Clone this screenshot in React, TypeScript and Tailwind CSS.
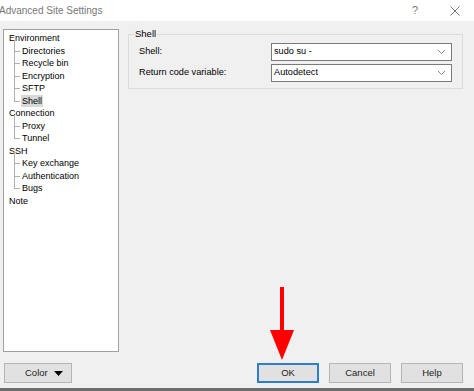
import React from "react";

const tree = [
  { label: "Environment", children: ["Directories", "Recycle bin", "Encryption", "SFTP", "Shell"] },
  { label: "Connection", children: ["Proxy", "Tunnel"] },
  { label: "SSH", children: ["Key exchange", "Authentication", "Bugs"] },
  { label: "Note", children: [] },
];

const Combo = ({ value }: { value: string }) => (
  <div className="flex h-[18px] w-[181px] items-center justify-between border border-[#7a7a7a] bg-white pl-[2px] pr-[5px]">
    <span>{value}</span>
    <svg width="9" height="6" viewBox="0 0 9 6">
      <path d="M1 1 L4.5 4.5 L8 1" fill="none" stroke="#8a8a8a" strokeWidth="1" />
    </svg>
  </div>
);

const Btn = ({ children, primary }: { children: React.ReactNode; primary?: boolean }) => (
  <button
    className={
      "flex h-[20px] w-[62px] items-center justify-center bg-[#e1e1e1] text-[9.5px] text-[#222] " +
      (primary ? "border-2 border-[#2f7fc8]" : "border border-[#b5b5b5]")
    }
  >
    {children}
  </button>
);

export default function App() {
  return (
    <div className="relative flex h-[391px] w-[474px] flex-col bg-[#f0f0f0] text-[9.2px] text-black [font-family:'Liberation_Sans',Arial,sans-serif]">
      <div className="flex h-[21px] items-center bg-white text-[10px] text-[#777]">
        <span className="ml-[-1px]">Advanced Site Settings</span>
        <span className="ml-auto mr-[32px] text-[11px]">?</span>
        <svg width="10" height="10" viewBox="0 0 10 10" className="mr-[14px]">
          <path d="M0.5 0.5 L9.5 9.5 M9.5 0.5 L0.5 9.5" stroke="#777" strokeWidth="1" />
        </svg>
      </div>

      <div className="flex px-[3px] pt-[8px]">
        <div className="h-[323px] w-[116px] border border-[#a0a0a0] bg-white pt-[2px] pl-[5px] text-[9px] leading-[12.5px]">
          {tree.map((node) => (
            <div key={node.label}>
              <div>{node.label}</div>
              {node.children.map((c, i) => (
                <div key={c} className="relative flex pl-[12px]">
                  <span
                    className={
                      "absolute left-[5px] w-[1px] bg-[#b0b0b0] " +
                      (i === node.children.length - 1 ? "top-[-5px] h-[12px]" : "top-[-5px] h-[13px]")
                    }
                  />
                  <span className="absolute left-[5px] top-[6px] h-[1px] w-[6px] bg-[#b0b0b0]" />
                  <span className={c === "Shell" && node.label === "Environment" ? "bg-[#d9d9d9] px-[1px]" : "px-[1px]"}>
                    {c}
                  </span>
                </div>
              ))}
            </div>
          ))}
        </div>

        <fieldset className="ml-[9px] h-[60px] w-[335px] border border-[#dcdcdc] px-[10px] pb-[8px]">
          <legend className="ml-[-5px] px-[1px] text-[9.5px] leading-[10px]">Shell</legend>
          <div className="mt-[4px] flex items-center">
            <span className="w-[132px]">Shell:</span>
            <Combo value="sudo su -" />
          </div>
          <div className="mt-[3px] flex items-center">
            <span className="w-[132px]">Return code variable:</span>
            <Combo value="Autodetect" />
          </div>
        </fieldset>
      </div>

      <div className="mt-[11px] flex items-center px-[4px]">
        <button className="flex h-[20px] w-[68px] items-center border border-[#b5b5b5] bg-[#e1e1e1] pl-[20px] pr-[8px] text-[9.5px] text-[#222]">
          <span>Color</span>
          <svg width="9" height="5" viewBox="0 0 9 5" className="ml-auto">
            <path d="M0 0 L9 0 L4.5 5 Z" fill="#000" />
          </svg>
        </button>
        <div className="ml-auto flex gap-[10px] pr-[7px]">
          <Btn primary>OK</Btn>
          <Btn>Cancel</Btn>
          <Btn>Help</Btn>
        </div>
      </div>

      <div className="mt-auto h-[3px] bg-[#6d6d6d]" />

      <svg width="26" height="74" viewBox="0 0 26 74" className="absolute left-[269px] top-[287px]">
        <rect x="11" y="0" width="4" height="44" fill="#ff0000" />
        <path d="M1 43 L25 43 L13 73 Z" fill="#ff0000" />
      </svg>
    </div>
  );
}
